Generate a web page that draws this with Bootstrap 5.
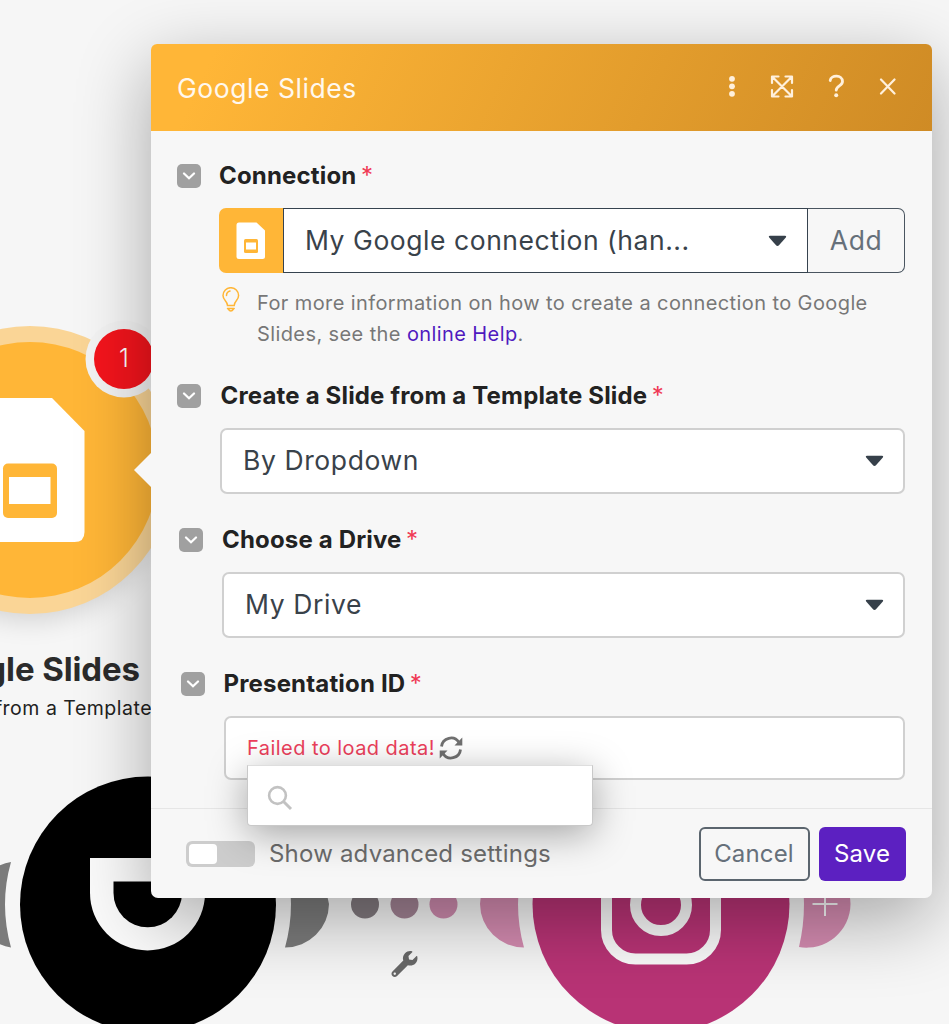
<!DOCTYPE html>
<html lang="en">
<head>
<meta charset="utf-8">
<meta name="viewport" content="width=device-width, initial-scale=1">
<title>Google Slides</title>
<link href="https://cdn.jsdelivr.net/npm/bootstrap@5.3.0/dist/css/bootstrap.min.css" rel="stylesheet">
<style>
body{background:#f6f6f6;font-family:Inter,"Liberation Sans",sans-serif;color:#212121;height:1024px}
.scenario{width:949px;height:1024px}
.scenario>svg{left:0;top:0}
.node-title{right:809px;top:647px;font-size:33px;line-height:44px;font-weight:700;letter-spacing:-.1px;color:#2b2b2b}
.node-sub{right:797px;top:694px;font-size:19.5px;line-height:28px;letter-spacing:.5px}
.node-count{left:94px;top:329px;width:60px;height:60px;font-size:25px;font-weight:300;background:#f4141c}
.panel{margin:44px 0 0 151px;width:780.5px;height:854px;border-radius:7px;background:#f7f7f7;box-shadow:0 22px 75px rgba(0,0,0,.33)}
.panel-top{height:87px;padding:0 36px 2px 26px;border-radius:6px 6px 0 0;background:linear-gradient(115deg,#ffb637 0%,#ffb637 8%,#cf8b25 100%);color:#fff8ee}
.panel-top h1{font-size:26.5px;font-weight:400;letter-spacing:.55px;line-height:32px}
.panel-body{height:678px;padding:33px 26.5px 0 26px;border-bottom:1.5px solid #e6e6e6}
.notch{left:-17px;top:408px}
.field-head{height:24px;font-size:24px;font-weight:700;line-height:24px;color:#222;letter-spacing:.17px}
.field-head .req{color:#f03a55;font-weight:400;margin-left:4.5px}
.toggle{width:24px;height:24px;border-radius:5px;background:#a0a0a0;margin-right:18px}
.i1{margin-left:2px}.i2{margin-left:3.5px}
.field-box{margin-top:20px;height:66px;border:2px solid #d0d0d0;border-radius:7px;background:#fff;font-size:26.5px;font-weight:400;color:#39424a;letter-spacing:.6px;padding:0 19px 1px 21px}
.conn{margin:20px 0 0 42px;height:65px;font-size:26.5px;font-weight:400;letter-spacing:.55px}
.conn-app{width:64px;background:#ffb637;border-radius:7px 0 0 7px}
.conn-name{border:1.5px solid #36434f;color:#39424a;padding:0 20px 0 21px}
.conn-add{width:97px;border:1.5px solid #4a5560;border-left:0;border-radius:0 7px 7px 0;color:#66707a}
.help{margin:14px 0 0 45px;font-size:20px;line-height:31px;font-weight:400;color:#777;letter-spacing:.4px}
.help>div{padding-top:1px;height:62px}
.help a{color:#4f1abf;text-decoration:none}
.gap-a{margin-top:35px}.gap-b{margin-top:34px}
.fail{font-size:20px;color:#ec3f5c;letter-spacing:.45px}
.search-pop{left:96px;top:721px;width:346px;height:61px;background:#fff;border:1.5px solid #c9c9c9;border-top-color:#dedede;border-radius:0 0 4px 4px;box-shadow:0 8px 38px rgba(0,0,0,.34)}
.panel-foot{height:89px;padding:0 26px 0 35px}
.switch{width:69px;height:26px;border-radius:6px;background:#cdcdcd;padding:3px}
.switch span{width:28px;height:20px;border-radius:4px;background:#fff}
.adv{margin-left:14px;font-size:24px;font-weight:400;color:#6c6c6c;letter-spacing:.2px}
.panel-foot .btn{height:54px;font-size:24px;font-weight:400;letter-spacing:.15px;border-radius:6px;padding:0;line-height:1}
.panel-foot .btn-cancel{width:111px;border:2px solid #5b656e;color:#66707a}
.panel-foot .btn-save{width:87px;margin-left:9px;background:#5c20c1;color:#fff}
</style>
</head>
<body class="overflow-hidden">
<main class="scenario position-relative overflow-hidden">
  <svg class="position-absolute" width="949" height="1024" viewBox="0 0 949 1024" aria-hidden="true">
    <defs><filter id="soft" x="-50%" y="-50%" width="200%" height="200%"><feGaussianBlur stdDeviation="14"/></filter></defs>
    <!-- Google Slides module -->
    <circle cx="30" cy="490" r="130" fill="#000" opacity=".15" filter="url(#soft)"/>
    <circle cx="30" cy="470" r="144" fill="#fad596"/>
    <circle cx="30" cy="470" r="128" fill="#ffb637"/>
    <path d="M-24 398H52L84.500 431V532Q84.500 542 74.500 542H-24Z" fill="#fff"/>
    <rect x="3" y="463.500" width="54" height="54.500" rx="5" fill="#ffb637"/>
    <rect x="9" y="477" width="41.500" height="27" fill="#fff"/>
    <circle cx="124" cy="359" r="38.500" fill="#f3f3f3"/>
    <!-- black module -->
    <path d="M11 862Q-1 904 11 947.500A50 50 0 0 1-30 904A50 50 0 0 1 11 862Z" fill="#7b7b7b"/>
    <circle cx="148" cy="904.500" r="128" fill="#000"/>
    <path d="M90 858H205V893A57.500 57.500 0 0 1 90 893Z" fill="#fafafa"/>
    <path d="M113.500 881.500H182V893A34.250 34.250 0 0 1 113.500 893Z" fill="#000"/>
    <path d="M285 861A50 50 0 0 1 329 904A44 44 0 0 1 285 947.500Q297 904 285 861Z" fill="#7b7b7b"/>
    <circle cx="365" cy="904.500" r="14" fill="#827a7f"/><circle cx="404.500" cy="904.500" r="14" fill="#a28394"/><circle cx="443.500" cy="904.500" r="14" fill="#cd8aad"/>
    <path d="M524 861A44 44 0 0 0 480 904A44 44 0 0 0 524 947.500Q512 904 524 861Z" fill="#d48bb0"/>
    <!-- Instagram module -->
    <circle cx="661" cy="904" r="128.500" fill="#b83375"/>
    <rect x="606.500" y="850.500" width="109" height="108.500" rx="29" fill="none" stroke="#fafafa" stroke-width="11"/>
    <circle cx="661" cy="905" r="25.500" fill="none" stroke="#fafafa" stroke-width="11"/>
    <path d="M799 861A44 44 0 0 1 850.500 904A44 44 0 0 1 799 947Q809 904 799 861Z" fill="#d48bb0"/>
    <path d="M825 891v25M812.500 904h25" stroke="#fafafa" stroke-width="2"/>
    <!-- wrench -->
    <g transform="translate(391.500 951) scale(.0508)"><path fill="#686868" d="M507.700 109.100c-2.200-9-13.500-12.100-20.100-5.500l-74.400 74.400-67.900-11.300-11.300-67.900 74.400-74.400c6.600-6.600 3.400-17.900-5.700-20.200-47.400-11.700-99.600.9-136.600 37.900-39.600 39.600-50.500 97.100-34 147.200L18.700 402.800c-25 25-25 65.500 0 90.500s65.500 25 90.500 0l213.200-213.200c50.100 16.700 107.500 5.700 147.400-34.200 37.100-37.100 49.700-89.300 37.900-136.800zM64 472c-13.200 0-24-10.800-24-24s10.700-24 24-24 24 10.700 24 24-10.800 24-24 24z"/></g>
  </svg>
  <div class="node-count position-absolute rounded-circle d-flex align-items-center justify-content-center text-white">1</div>
  <div class="node-title position-absolute text-nowrap">Google Slides</div>
  <div class="node-sub position-absolute text-nowrap">Create a Slide from a Template</div>

  <section class="panel position-relative">
    <svg class="notch position-absolute" width="18" height="36" viewBox="0 0 18 36"><path d="M18 0L0 18L18 36Z" fill="#f7f7f7"/></svg>
    <header class="panel-top d-flex align-items-center justify-content-between">
      <h1 class="m-0" style="padding-top:2px">Google Slides</h1>
      <svg width="172" height="32" viewBox="0 0 172 32" fill="none" stroke="#fff0dc" stroke-width="2.200" stroke-linecap="round" stroke-linejoin="round">
        <g fill="#fff0dc" stroke="none"><circle cx="8" cy="7.800" r="2.900"/><circle cx="8" cy="15.300" r="2.900"/><circle cx="8" cy="22.800" r="2.900"/></g>
        <path d="M48.500 6L67.500 25M67.500 6L48.500 25M48 12V5.500H54.500M61.500 5.500H68V12M68 19V25.500H61.500M54.500 25.500H48V19"/>
        <path d="M106.200 9.500C107 3.500 118.500 3.700 118.500 10.500C118.500 15 112.200 14.800 112.200 19.200" stroke-width="2.800"/><circle cx="112.200" cy="24.300" r="2" fill="#fff0dc" stroke="none"/>
        <path d="M157 8.500L170.500 22.500M170.500 8.500L157 22.500"/>
      </svg>
    </header>

    <div class="panel-body">
      <div class="field-head d-flex align-items-center">
        <span class="toggle d-flex align-items-center justify-content-center"><svg width="14" height="8" viewBox="0 0 14 8"><path d="M2 1.500L7 6.300L12 1.500" fill="none" stroke="#fff" stroke-width="2.200" stroke-linecap="round"/></svg></span>
        <span>Connection</span><span class="req">*</span>
      </div>
      <div class="conn d-flex">
        <span class="conn-app d-flex align-items-center justify-content-center"><svg width="30" height="38" viewBox="0 0 30 38"><path d="M3 .5H20.500L29 8.500V34.500Q29 37 26.500 37H3Q.5 37 .5 34.500V3Q.5.500 3 .500Z" fill="#fff"/><rect x="8" y="17" width="14" height="14" rx="1.500" fill="#ffb637"/><rect x="10" y="20.500" width="10" height="7" fill="#fff"/></svg></span>
        <div class="conn-name bg-white flex-grow-1 d-flex align-items-center justify-content-between"><span>My Google connection (han...</span><svg width="19" height="12" viewBox="0 0 19 12"><path d="M2 .8H17Q19 1 17.600 2.700L11.200 10Q9.500 11.800 7.800 10L1.400 2.700Q0 1 2 .8Z" fill="#36404a"/></svg></div>
        <span class="conn-add d-flex align-items-center justify-content-center">Add</span>
      </div>
      <div class="help d-flex">
        <svg class="flex-shrink-0" width="35" height="28" viewBox="0 0 35 28" fill="none" stroke="#ffb637" stroke-width="1.500" stroke-linecap="round"><path d="M5.500 18.500C5.500 14 1 13.500 1 8.500A7.800 7.800 0 0 1 16.600 8.500C16.600 13.500 12.200 14 12.200 18.500ZM5.500 21.500H12.200M6.200 22Q8.900 26 11.500 22M4.500 8.500Q4.500 5 8 4"/></svg>
        <div>For more information on how to create a connection to Google<br>Slides, see the <a href="#">online Help</a>.</div>
      </div>

      <div class="field-head gap-a d-flex align-items-center">
        <span class="toggle d-flex align-items-center justify-content-center"><svg width="14" height="8" viewBox="0 0 14 8"><path d="M2 1.500L7 6.300L12 1.500" fill="none" stroke="#fff" stroke-width="2.200" stroke-linecap="round"/></svg></span>
        <span style="margin-left:1.500px">Create a Slide from a Template Slide</span><span class="req">*</span>
      </div>
      <div class="field-box d-flex align-items-center justify-content-between" style="margin-left:43px"><span>By Dropdown</span><svg width="19" height="12" viewBox="0 0 19 12"><path d="M2 .8H17Q19 1 17.600 2.700L11.200 10Q9.500 11.800 7.800 10L1.400 2.700Q0 1 2 .8Z" fill="#36404a"/></svg></div>

      <div class="field-head gap-b i1 d-flex align-items-center">
        <span class="toggle d-flex align-items-center justify-content-center"><svg width="14" height="8" viewBox="0 0 14 8"><path d="M2 1.500L7 6.300L12 1.500" fill="none" stroke="#fff" stroke-width="2.200" stroke-linecap="round"/></svg></span>
        <span style="margin-left:1px">Choose a Drive</span><span class="req">*</span>
      </div>
      <div class="field-box d-flex align-items-center justify-content-between" style="margin-left:45px"><span>My Drive</span><svg width="19" height="12" viewBox="0 0 19 12"><path d="M2 .8H17Q19 1 17.600 2.700L11.200 10Q9.500 11.800 7.800 10L1.400 2.700Q0 1 2 .8Z" fill="#36404a"/></svg></div>

      <div class="field-head gap-b i2 d-flex align-items-center">
        <span class="toggle d-flex align-items-center justify-content-center"><svg width="14" height="8" viewBox="0 0 14 8"><path d="M2 1.500L7 6.300L12 1.500" fill="none" stroke="#fff" stroke-width="2.200" stroke-linecap="round"/></svg></span>
        <span style="margin-left:1px">Presentation ID</span><span class="req">*</span>
      </div>
      <div class="field-box fail d-flex align-items-center" style="margin-left:47px;height:64px"><span>Failed to load data!</span><svg class="ms-1" width="24" height="24" viewBox="0 0 24 24" fill="none" stroke="#707070" stroke-width="2.800"><path d="M2.500 10.500A9.500 9.500 0 0 1 20 6.500M21.500 13.500A9.500 9.500 0 0 1 4 17.500"/><path d="M23.300 1.500V9.500H15.500ZM.7 22.500V14.500H8.500Z" fill="#707070" stroke="none"/></svg></div>
    </div>

    <footer class="panel-foot d-flex align-items-center">
      <span class="switch d-block"><span class="d-block"></span></span>
      <span class="adv">Show advanced settings</span>
      <button type="button" class="btn btn-cancel ms-auto">Cancel</button>
      <button type="button" class="btn btn-save">Save</button>
    </footer>

    <div class="search-pop position-absolute d-flex align-items-center"><svg style="margin:5px 0 0 19px" width="26" height="26" viewBox="0 0 26 26" fill="none" stroke="#c2c2c2" stroke-width="2.600"><circle cx="10.500" cy="10.500" r="8.400"/><path d="M16.500 16.500L24 24" stroke-width="3"/></svg></div>
  </section>
</main>
<script src="https://cdn.jsdelivr.net/npm/bootstrap@5.3.0/dist/js/bootstrap.bundle.min.js"></script>
</body>
</html>
